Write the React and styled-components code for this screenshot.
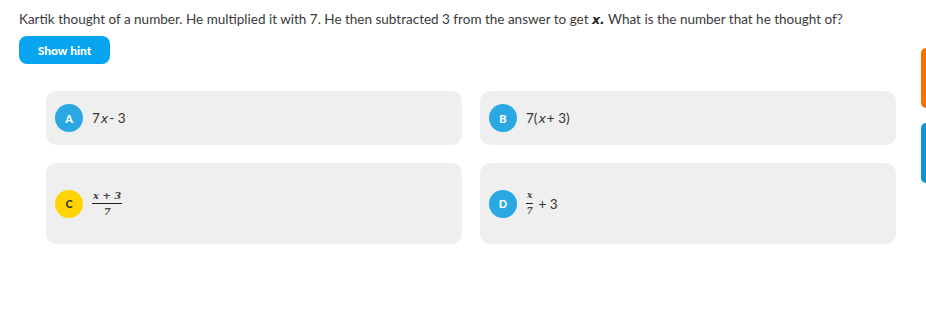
import React from 'react';
import styled, { createGlobalStyle } from 'styled-components';

const Global = createGlobalStyle`
  body {
    margin: 0;
    background: #fff;
    font-family: Lato, "Noto Sans", sans-serif;
    color: #333;
  }
`

const Page = styled.div`
  position: relative;
  width: 926px;
  height: 314px;
  padding: 10px 30px 0 19px;
  box-sizing: border-box;
  overflow: hidden;
`

const Question = styled.p`
  margin: 0;
  height: 18px;
  font-size: 13.5px;
  line-height: 18px;
  color: #3a3a3a;
  white-space: nowrap;

  b {
    font-family: "DejaVu Sans", sans-serif;
    font-style: italic;
    font-weight: bold;
    font-size: 12.5px;
    line-height: 1;
    color: #222;
  }
`

const HintButton = styled.button`
  margin-top: 8px;
  width: 91px;
  height: 28px;
  border: none;
  border-radius: 8px;
  background: #08a4ef;
  color: #fff;
  font-family: Lato, sans-serif;
  font-weight: 900;
  font-size: 12px;
`

const Options = styled.div`
  display: grid;
  grid-template-columns: 416px 416px;
  grid-template-rows: 54px 81px;
  column-gap: 18px;
  row-gap: 18px;
  margin: 27px 0 0 27px;
`

const Card = styled.div`
  display: flex;
  align-items: center;
  gap: 9px;
  padding: 0 9px;
  background: #efefef;
  border-radius: 10px;
`

const Badge = styled.span`
  display: flex;
  align-items: center;
  justify-content: center;
  width: 28px;
  height: 28px;
  border-radius: 50%;
  flex: none;
  background: ${p => p.$yellow ? '#ffd400' : '#2aa8e3'};
  color: ${p => p.$yellow ? '#3a3a3a' : '#fff'};
  font-family: Lato, sans-serif;
  font-weight: 900;
  font-size: 11px;
`

const Expr = styled.span`
  display: flex;
  align-items: center;
  font-size: 13.5px;
  color: #333;

  i {
    font-family: "DejaVu Sans", sans-serif;
    font-style: italic;
    font-size: 12.5px;
    margin: 0 1px;
  }
`

const Frac = styled.span`
  display: inline-flex;
  flex-direction: column;
  align-items: center;
  font-family: "DejaVu Serif", serif;
  font-style: italic;
  font-weight: bold;
  font-size: ${p => p.$small ? '9px' : '10px'};
  line-height: 11px;
  color: #444;
  margin-right: 5px;

  span:first-child {
    padding: 0 1px 2px;
    border-bottom: 1px solid #222;
  }
  span:last-child {
    padding-top: 2px;
  }
`

const SideTab = styled.div`
  position: absolute;
  right: 0;
  top: ${p => p.$top}px;
  width: 5px;
  height: 60px;
  border-radius: 10px 0 0 10px;
  background: ${p => p.$bg};
`

export default () => (
  <Page>
    <Global />
    <Question>
      Kartik thought of a number. He multiplied it with 7. He then subtracted 3 from the answer to get <b>x.</b> What is the number that he thought of?
    </Question>
    <HintButton>Show hint</HintButton>
    <Options>
      <Card>
        <Badge>A</Badge>
        <Expr>7<i>x</i>- 3</Expr>
      </Card>
      <Card>
        <Badge>B</Badge>
        <Expr>7(<i>x</i>+ 3)</Expr>
      </Card>
      <Card>
        <Badge $yellow>C</Badge>
        <Expr>
          <Frac><span>x + 3</span><span>7</span></Frac>
        </Expr>
      </Card>
      <Card>
        <Badge>D</Badge>
        <Expr>
          <Frac $small><span>x</span><span>7</span></Frac>+ 3
        </Expr>
      </Card>
    </Options>
    <SideTab $top={48} $bg="#fb7100" />
    <SideTab $top={123} $bg="#0d95d8" />
  </Page>
)
